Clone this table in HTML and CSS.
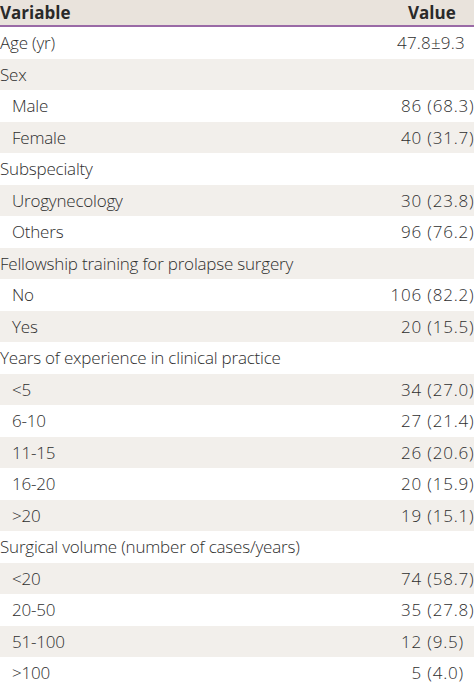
FILE: index.html
```html
<!DOCTYPE html>
<html>
<head>
  <link rel="stylesheet" href="styles.css">
</head>
<body>
  <div class="table">
    <div class="head">
      <div class="label">Variable</div>
      <div class="value">Value</div>
    </div>
    <div class="row"><div class="label">Age (yr)</div><div class="value"><span class="mean">47.8±9.3</span></div></div>
    <div class="row"><div class="label">Sex</div><div class="value"></div></div>
    <div class="row sub"><div class="label">Male</div><div class="value"><span class="n">86</span> (68.3)</div></div>
    <div class="row sub"><div class="label">Female</div><div class="value"><span class="n">40</span> (31.7)</div></div>
    <div class="row"><div class="label">Subspecialty</div><div class="value"></div></div>
    <div class="row sub"><div class="label">Urogynecology</div><div class="value"><span class="n">30</span> (23.8)</div></div>
    <div class="row sub"><div class="label">Others</div><div class="value"><span class="n">96</span> (76.2)</div></div>
    <div class="row"><div class="label">Fellowship training for prolapse surgery</div><div class="value"></div></div>
    <div class="row sub"><div class="label">No</div><div class="value"><span class="n">106</span> (82.2)</div></div>
    <div class="row sub"><div class="label">Yes</div><div class="value"><span class="n">20</span> (15.5)</div></div>
    <div class="row"><div class="label">Years of experience in clinical practice</div><div class="value"></div></div>
    <div class="row sub"><div class="label">&lt;5</div><div class="value"><span class="n">34</span> (27.0)</div></div>
    <div class="row sub"><div class="label">6-10</div><div class="value"><span class="n">27</span> (21.4)</div></div>
    <div class="row sub"><div class="label">11-15</div><div class="value"><span class="n">26</span> (20.6)</div></div>
    <div class="row sub"><div class="label">16-20</div><div class="value"><span class="n">20</span> (15.9)</div></div>
    <div class="row sub"><div class="label">&gt;20</div><div class="value"><span class="n">19</span> (15.1)</div></div>
    <div class="row"><div class="label">Surgical volume (number of cases/years)</div><div class="value"></div></div>
    <div class="row sub"><div class="label">&lt;20</div><div class="value"><span class="n">74</span> (58.7)</div></div>
    <div class="row sub"><div class="label">20-50</div><div class="value"><span class="n">35</span> (27.8)</div></div>
    <div class="row sub"><div class="label">51-100</div><div class="value"><span class="n">12</span> (9.5)</div></div>
    <div class="row sub"><div class="label">&gt;100</div><div class="value"><span class="n">5</span> (4.0)</div></div>
  </div>
</body>
</html>
```

FILE: styles.css
```css
* {
  margin: 0;
  padding: 0;
  box-sizing: border-box;
}

body {
  width: 474px;
  height: 683px;
  overflow: hidden;
  background: #fff;
  font-family: "Open Sans", "Liberation Sans", sans-serif;
  font-size: 17px;
  letter-spacing: -0.2px;
  color: #2e2e2e;
}

.table {
  display: flex;
  flex-direction: column;
}

.head,
.row {
  display: flex;
  align-items: center;
  white-space: nowrap;
}

.head {
  height: 27px;
  background: #e9e3dc;
  border-bottom: 2px solid #9a6aa6;
  font-weight: 700;
  letter-spacing: 0;
  color: #2a2a2a;
}

.row {
  height: 31.5px;
  font-weight: 300;
}

.row:nth-child(odd) {
  background: #f2efeb;
}

.label {
  flex: 1;
}

.sub .label {
  padding-left: 12px;
}

.value {
  width: 84px;
}

.row .value {
  letter-spacing: 0.8px;
}

.head .value {
  padding-left: 18px;
}

.n {
  display: inline-block;
  width: 32px;
  text-align: right;
}

.mean {
  padding-left: 7px;
  letter-spacing: 0.2px;
}
```
